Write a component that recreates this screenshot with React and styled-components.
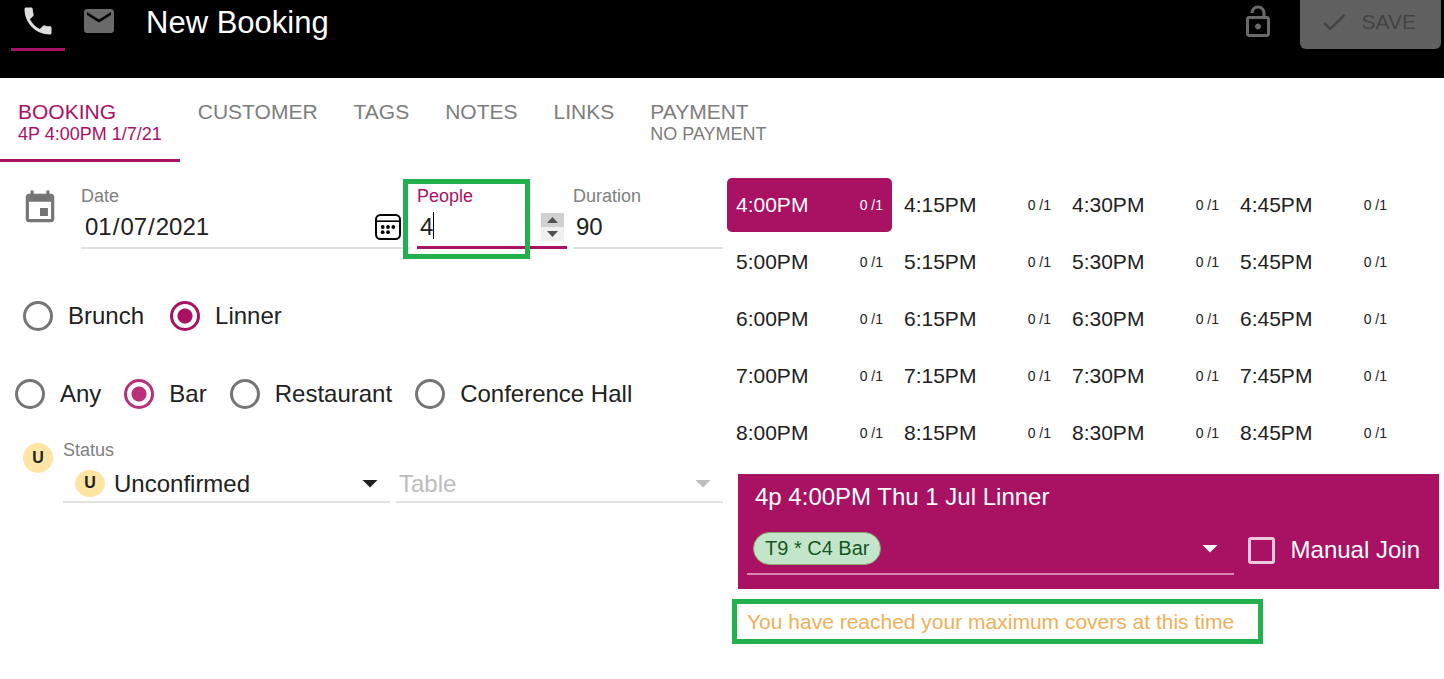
import React, { useState } from 'react';
import styled, { createGlobalStyle } from 'styled-components';
import { MdPhone, MdEmail, MdOutlineLockOpen, MdCheck, MdArrowDropDown } from 'react-icons/md';

const GlobalStyle = createGlobalStyle`
  * {
    box-sizing: border-box;
  }

  body {
    margin: 0;
    background: #fff;
    color: #212121;
    font-family: "Liberation Sans", Arial, sans-serif;
    font-size: 24px;
  }

  button, input, select {
    margin: 0;
    padding: 0;
    border: none;
    border-radius: 0;
    background: none;
    color: inherit;
    font: inherit;
    outline: none;
  }
`;

const PINK = '#a91162';
const GREEN = '#22b14c';

const Header = styled.header`
  display: flex;
  align-items: flex-start;
  height: 78px;
  padding: 0 3px 0 11px;
  background: #000;
  color: #fff;
`;

const ContactTab = styled.button`
  display: flex;
  justify-content: center;
  width: 54px;
  height: 51px;
  padding-top: 3px;
  color: ${(p) => (p.$active ? '#dedede' : '#6a6a6a')};
  border-bottom: 3px solid ${(p) => (p.$active ? PINK : 'transparent')};
`;

const Title = styled.h1`
  flex: 1;
  margin: 0 0 0 20px;
  font-size: 31px;
  font-weight: 400;
  line-height: 46px;
`;

const ContactTabs = styled.div`
  display: flex;
  gap: 7px;
`;

const LockButton = styled.button`
  display: flex;
  margin: 4px 24px 0 0;
  color: #6a6a6a;
`;

const SaveButton = styled.button`
  display: flex;
  align-items: center;
  gap: 13px;
  height: 49px;
  padding: 0 25px 5px 19px;
  border-radius: 0 0 6px 6px;
  background: #616161;
  color: #434343;
  font-size: 21px;
`;

const Tabs = styled.nav`
  display: flex;
  height: 84px;
`;

const Tab = styled.button`
  display: flex;
  flex-direction: column;
  align-items: flex-start;
  padding: 23px 18px 0;
  border-bottom: 3px solid ${(p) => (p.$active ? PINK : 'transparent')};
  color: ${(p) => (p.$active ? PINK : '#7d7d7d')};
  font-size: 21px;
  line-height: 22px;

  small {
    font-size: 18px;
  }
`;

const Main = styled.main`
  display: grid;
  grid-template-columns: 727fr 717fr;
`;

const Form = styled.form`
  padding: 23px 4px 0 0;
`;

const FieldRow = styled.div`
  display: flex;
  gap: ${(p) => p.$gap};
  padding-left: ${(p) => p.$indent};
`;

const RowIcon = styled.div`
  display: flex;
  flex: none;
  align-self: flex-start;
  margin-top: 4px;
  color: #757575;
`;

const Fields = styled.div`
  display: grid;
  flex: 1;
  grid-template-columns: ${(p) => p.$columns};
  column-gap: 6px;
`;

const Field = styled.div`
  position: relative;
  display: flex;
  flex-direction: column;
  justify-content: flex-end;
  height: 64px;
  color: ${(p) => (p.$focused ? PINK : '#808080')};

  label {
    height: 22px;
    font-size: 18px;
    line-height: 22px;
  }
`;

const Control = styled.div`
  position: relative;
  display: flex;
  align-items: center;
  height: 42px;
  padding: ${(p) => p.$pad || '0 3px'};
  border-bottom: ${(p) => (p.$focused ? `3px solid ${PINK}` : '2px solid #e2e2e2')};
  color: ${(p) => (p.$disabled ? '#bdbdbd' : '#212121')};

  > svg {
    flex: none;
    pointer-events: none;
  }
`;

const Input = styled.input`
  flex: 1;
  min-width: 0;
  height: 38px;
  caret-color: transparent;
  appearance: textfield;

  &::-webkit-inner-spin-button,
  &::-webkit-calendar-picker-indicator {
    display: none;
  }
`;

const Select = styled.select`
  flex: 1;
  min-width: 0;
  height: 36px;
  appearance: none;

  &:disabled {
    opacity: 1;
  }
`;

const Caret = styled.i`
  position: absolute;
  left: 16px;
  top: 5px;
  width: 1px;
  height: 27px;
  background: #000;
`;

const PickerButton = styled.button`
  display: flex;
  color: #000;
`;

const Spinner = styled.div`
  display: flex;
  flex-direction: column;

  button {
    display: flex;
    align-items: center;
    justify-content: center;
    width: 23px;
    height: 14px;
    background: #f0f0f0;
    color: #505050;
  }

  button:first-child {
    background: #d0d0d0;
  }
`;

const Highlight = styled.div`
  position: absolute;
  left: -14px;
  top: -6px;
  width: 127px;
  height: 80px;
  border: 5px solid ${GREEN};
  pointer-events: none;
`;

const RadioRow = styled.div`
  display: flex;
  gap: ${(p) => p.$gap};
  margin-top: ${(p) => p.$top};
  padding-left: ${(p) => p.$indent};
`;

const RadioLabel = styled.label`
  display: flex;
  align-items: center;
  gap: 15px;
  line-height: 30px;
`;

const Radio = styled.input`
  width: 30px;
  height: 30px;
  border: 3px solid #757575;
  border-radius: 50%;
  appearance: none;

  &:checked {
    border-color: ${(p) => p.$color};
    background: radial-gradient(circle, ${(p) => p.$color} 7px, transparent 8px);
  }
`;

const StatusSection = styled.div`
  margin-top: 30px;
`;

const Avatar = styled.span`
  display: flex;
  flex: none;
  align-items: center;
  justify-content: center;
  width: 30px;
  height: ${(p) => p.$height || '30px'};
  margin-right: ${(p) => p.$after || '0'};
  border-radius: 50%;
  background: #ffe5a3;
  color: #212121;
  font-size: 16px;
  font-weight: 700;
`;

const Side = styled.section`
  padding: 16px 5px 0 0;
`;

const Slots = styled.div`
  display: grid;
  grid-template-columns: repeat(4, 1fr);
  gap: 3px;
  margin-right: 43px;
`;

const Slot = styled.button`
  display: flex;
  align-items: center;
  justify-content: space-between;
  height: 54px;
  padding: 0 9px;
  border-radius: 5px;
  background: ${(p) => (p.$active ? PINK : 'transparent')};
  color: ${(p) => (p.$active ? '#fff' : '#212121')};
  font-size: 21px;

  small {
    font-size: 14px;
  }
`;

const Summary = styled.div`
  margin: 14px 0 0 11px;
  padding: 8px 19px 14px 9px;
  background: ${PINK};
  color: #fff;

  h2 {
    margin: 0 0 0 8px;
    font-size: 24px;
    font-weight: 400;
    line-height: 30px;
  }
`;

const SummaryRow = styled.div`
  display: flex;
  align-items: center;
  gap: 14px;
  margin-top: 13px;
`;

const TablePicker = styled.button`
  display: flex;
  flex: 1;
  align-items: center;
  justify-content: space-between;
  height: 50px;
  padding: 0 6px 2px;
  border-bottom: 2px solid #d48ab1;
`;

const Chip = styled.span`
  height: 33px;
  padding: 0 11px;
  border: 1px solid #87a96b;
  border-radius: 17px;
  background: #c3e6cb;
  color: #155724;
  font-size: 20px;
  line-height: 30px;
`;

const CheckLabel = styled.label`
  display: flex;
  align-items: center;
  gap: 16px;
`;

const Checkbox = styled.input`
  width: 27px;
  height: 27px;
  border: 3px solid #ecc9dc;
  border-radius: 3px;
  appearance: none;

  &:checked {
    background: #ecc9dc;
  }
`;

const Warning = styled.p`
  width: fit-content;
  margin: 10px 0 0 5px;
  padding: 0 24px 0 10px;
  border: 5px solid ${GREEN};
  color: #efb056;
  font-size: 21px;
  line-height: 35px;
`;

const EventIcon = () => (
  <svg width="38" height="38" viewBox="0 0 24 24" fill="currentColor">
    <path d="M17 12h-5v5h5v-5zM16 1v2H8V1H6v2H5c-1.11 0-1.99.9-1.99 2L3 19c0 1.1.89 2 2 2h14c1.1 0 2-.9 2-2V5c0-1.1-.9-2-2-2h-1V1h-2zm3 18H5V8h14v11z" />
  </svg>
);

const CalendarGlyph = () => (
  <svg width="26" height="26" viewBox="0 0 26 26" fill="none" stroke="currentColor">
    <rect x="1" y="1" width="24" height="24" rx="4.5" strokeWidth="2" />
    <path d="M1 7.2h24" strokeWidth="1.6" />
    <g fill="currentColor" stroke="none">
      <circle cx="7.7" cy="13" r="1.9" />
      <circle cx="13" cy="13" r="1.9" />
      <circle cx="18.3" cy="13" r="1.9" />
      <circle cx="7.7" cy="18.2" r="1.9" />
      <circle cx="13" cy="18.2" r="1.9" />
    </g>
  </svg>
);

const Triangle = ({ up }) => (
  <svg width="11" height="6" viewBox="0 0 11 6" fill="currentColor">
    <path d={up ? 'M0 6 5.5 0 11 6z' : 'M0 0 5.5 6 11 0z'} />
  </svg>
);

const tabs = [
  { name: 'BOOKING', detail: '4P 4:00PM 1/7/21' },
  { name: 'CUSTOMER' },
  { name: 'TAGS' },
  { name: 'NOTES' },
  { name: 'LINKS' },
  { name: 'PAYMENT', detail: 'NO PAYMENT' },
];

const sessions = ['Brunch', 'Linner'];
const areas = ['Any', 'Bar', 'Restaurant', 'Conference Hall'];

const slots = [4, 5, 6, 7, 8].flatMap((hour) =>
  ['00', '15', '30', '45'].map((minute) => `${hour}:${minute}PM`)
);

const RadioGroup = ({ name, options, value, onChange, color, ...layout }) => (
  <RadioRow role="radiogroup" aria-label={name} {...layout}>
    {options.map((option) => (
      <RadioLabel key={option}>
        <Radio
          type="radio"
          name={name}
          checked={value === option}
          onChange={() => onChange(option)}
          $color={color}
        />
        {option}
      </RadioLabel>
    ))}
  </RadioRow>
);

const App = () => {
  const [tab, setTab] = useState('BOOKING');
  const [people, setPeople] = useState(4);
  const [session, setSession] = useState('Linner');
  const [area, setArea] = useState('Bar');
  const [slot, setSlot] = useState('4:00PM');

  return (
    <>
      <GlobalStyle />
      <Header>
        <ContactTabs>
          <ContactTab $active aria-label="Phone">
            <MdPhone size={36} />
          </ContactTab>
          <ContactTab aria-label="Email">
            <MdEmail size={36} />
          </ContactTab>
        </ContactTabs>
        <Title>New Booking</Title>
        <LockButton aria-label="Lock">
          <MdOutlineLockOpen size={36} />
        </LockButton>
        <SaveButton disabled>
          <MdCheck size={30} />
          SAVE
        </SaveButton>
      </Header>

      <Tabs>
        {tabs.map(({ name, detail }) => (
          <Tab key={name} $active={tab === name} onClick={() => setTab(name)}>
            {name}
            {detail && <small>{detail}</small>}
          </Tab>
        ))}
      </Tabs>

      <Main>
        <Form onSubmit={(e) => e.preventDefault()}>
          <FieldRow $indent="21px" $gap="22px">
            <RowIcon>
              <EventIcon />
            </RowIcon>
            <Fields $columns="1fr 150px 150px">
              <Field>
                <label htmlFor="date">Date</label>
                <Control $pad="0 10px 0 3px">
                  <Input id="date" type="date" defaultValue="2021-01-07" />
                  <PickerButton type="button" aria-label="Pick a date">
                    <CalendarGlyph />
                  </PickerButton>
                </Control>
              </Field>
              <Field $focused>
                <label htmlFor="people">People</label>
                <Control $focused>
                  <Input
                    id="people"
                    type="number"
                    value={people}
                    onChange={(e) => setPeople(e.target.value)}
                  />
                  <Caret />
                  <Spinner>
                    <button type="button" aria-label="More people" onClick={() => setPeople(Number(people) + 1)}>
                      <Triangle up />
                    </button>
                    <button type="button" aria-label="Fewer people" onClick={() => setPeople(Number(people) - 1)}>
                      <Triangle />
                    </button>
                  </Spinner>
                </Control>
                <Highlight />
              </Field>
              <Field>
                <label htmlFor="duration">Duration</label>
                <Control>
                  <Input id="duration" type="number" defaultValue={90} />
                </Control>
              </Field>
            </Fields>
          </FieldRow>

          <RadioGroup
            name="Session"
            options={sessions}
            value={session}
            onChange={setSession}
            color={PINK}
            $gap="26px"
            $top="52px"
            $indent="23px"
          />
          <RadioGroup
            name="Area"
            options={areas}
            value={area}
            onChange={setArea}
            color="#b8307a"
            $gap="23px"
            $top="48px"
            $indent="15px"
          />

          <StatusSection>
            <FieldRow $indent="23px" $gap="10px">
              <RowIcon>
                <Avatar>U</Avatar>
              </RowIcon>
              <Fields $columns="1fr 1fr">
                <Field>
                  <label htmlFor="status">Status</label>
                  <Control $pad="4px 2px 0 12px">
                    <Avatar $height="27px" $after="9px">U</Avatar>
                    <Select id="status">
                      <option>Unconfirmed</option>
                    </Select>
                    <MdArrowDropDown size={36} />
                  </Control>
                </Field>
                <Field>
                  <Control $pad="4px 2px 0 3px" $disabled>
                    <Select disabled aria-label="Table">
                      <option>Table</option>
                    </Select>
                    <MdArrowDropDown size={36} />
                  </Control>
                </Field>
              </Fields>
            </FieldRow>
          </StatusSection>
        </Form>

        <Side>
          <Slots>
            {slots.map((time) => (
              <Slot key={time} $active={slot === time} onClick={() => setSlot(time)}>
                {time}
                <small>0 /1</small>
              </Slot>
            ))}
          </Slots>

          <Summary>
            <h2>4p 4:00PM Thu 1 Jul Linner</h2>
            <SummaryRow>
              <TablePicker aria-haspopup="listbox">
                <Chip>T9 * C4 Bar</Chip>
                <MdArrowDropDown size={36} />
              </TablePicker>
              <CheckLabel>
                <Checkbox type="checkbox" />
                Manual Join
              </CheckLabel>
            </SummaryRow>
          </Summary>

          <Warning>You have reached your maximum covers at this time</Warning>
        </Side>
      </Main>
    </>
  );
};

export default App;
